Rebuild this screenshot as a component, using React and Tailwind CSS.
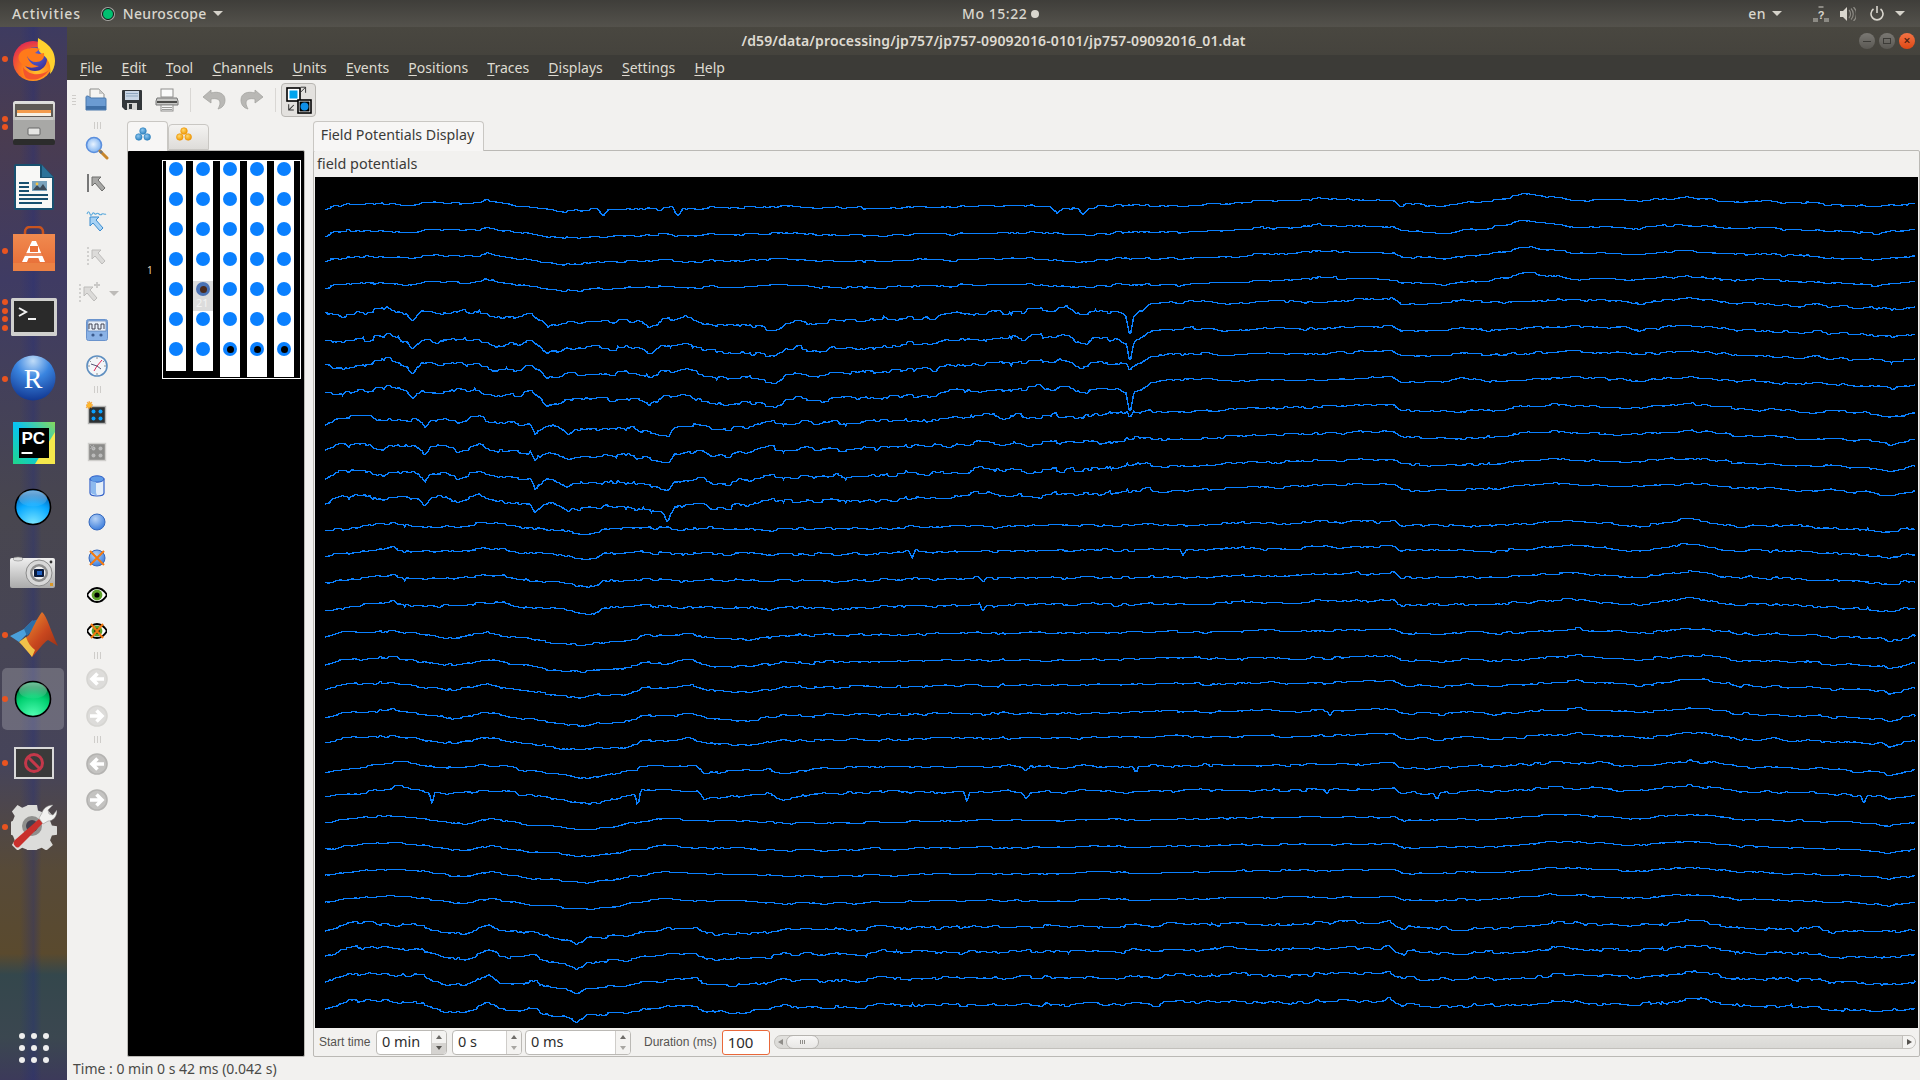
import React from "react";

/* ---------- traces ---------- */
const tail = (o) => [[1500,o],[1550,o-4],[1583,o-4],[1640,o-1],[1690,o-6],[1740,o],[1767,o],[1877,o+5],[1890,o+7],[1916,o+3]];
const GROUPS = {
  A: { amp: 0.9, c: [[325,4],[332,1],[355,-2],[395,-1],[415,0],[425,-2],[480,-2],[487,-5],[500,-3],[525,2],[540,4],[575,6],[600,4],[640,3],[660,2],[700,3],[750,1],[790,1],[820,2],[880,3],[940,1],[1000,1],[1043,0],[1087,3],[1133,-1],[1183,1],[1207,-2],[1320,-7],[1393,-5],[1403,-1],[1443,1],[1500,-7],[1524,-11],[1550,-8],[1583,-6],[1640,-5],[1690,-8],[1740,-4],[1767,-4],[1877,0],[1916,-2]] },
  B: { amp: 2.0, c: [[325,0],[353,-2],[390,-7],[403,-1],[413,7],[420,-2],[453,-3],[473,-4],[487,-3],[500,3],[533,-1],[550,10],[567,5],[587,6],[637,6],[650,10],[657,7],[687,2],[710,8],[737,7],[775,13],[787,6],[820,6],[900,2],[1000,-4],[1067,-7],[1077,-2],[1117,-3],[1128,-2],[1140,-5],[1150,-12],[1177,-14],[1233,-12],[1317,-14],[1393,-17],[1403,-11],[1467,-14],...tail(-12)] },
  C: { amp: 2.0, c: [[325,2],[337,-4],[370,-7],[383,-3],[417,-2],[425,3],[432,-6],[460,0],[480,-6],[500,0],[530,0],[535,9],[553,3],[567,10],[573,6],[610,3],[653,8],[670,11],[678,2],[703,0],[713,5],[753,2],[787,0],[820,0],[900,-4],[1000,-8],[1087,-8],[1130,-11],[1180,-12],[1320,-17],[1393,-18],[1403,-13],...tail(-14)] },
  D: { amp: 1.1, c: [[325,2],[393,-6],[403,-2],[453,-3],[487,-6],[533,0],[570,3],[580,7],[590,7],[603,2],[613,-1],[700,0],[820,1],[900,-1],[1000,-2],[1130,-3],[1300,-6],[1393,-7],[1403,-3],...tail(-3)] },
  E: { amp: 1.0, c: [[325,3],[340,-2],[393,-5],[453,3],[487,-3],[507,2],[567,8],[580,10],[637,5],[642,1],[693,-2],[703,3],[747,5],[787,-1],[820,0],[900,-1],[1000,-2],[1130,-3],[1300,-5],[1393,-6],[1403,-2],...tail(-2)] },
  F: { amp: 1.0, c: [[325,3],[397,-7],[420,-5],[432,-2],[453,0],[487,-3],[533,2],[570,7],[590,10],[637,2],[640,-2],[697,-2],[703,5],[767,0],[780,5],[820,0],[900,-1],[1000,-2],[1130,-2],[1300,-4],[1393,-5],[1403,-1],...tail(-2)] },
  G: { amp: 0.7, c: [[325,2],[370,-4],[420,-3],[453,2],[470,3],[490,-2],[533,5],[560,7],[587,10],[613,7],[630,2],[667,-2],[693,0],[820,3],[900,1],[1000,0],[1130,-1],[1300,-3],[1393,-4],[1403,0],...tail(-1)] },
  H: { amp: 1.4, c: [[325,5],[343,-3],[367,-5],[420,-2],[450,5],[467,7],[490,-2],[500,3],[533,5],[563,10],[577,15],[587,10],[620,8],[653,2],[697,2],[703,5],[737,7],[787,2],[820,2],[900,0],[1000,-1],[1130,-2],[1300,-4],[1393,-5],[1403,-1],...tail(0)] },
};
const ROWS = [
  [205,"A"],[232,"A"],[258,"A"],[284,"A"],[315,"B"],[342,"B"],[367,"B"],[393,"B"],
  [423,"C"],[450,"C"],[477,"C"],[502,"C"],[528,"D"],[553,"D"],[580,"D"],[607,"D"],
  [635,"E"],[662,"E"],[687,"E"],[715,"E"],[740,"E"],[768,"F"],[793,"F"],[820,"G"],
  [847,"G"],[873,"G"],[900,"G"],[927,"H"],[952,"H"],[978,"H"],[1005,"H"],
];
const SPIKES = {
  0: [[603,6,5],[660,4,4],[678,8,5],[1057,7,7],[1083,7,5],[1400,4,5]],
  4: [[1130,17,4],[1128,6,9]], 5: [[1130,17,4],[1128,6,9]], 6: [[1130,5,6]], 7: [[1130,19,4],[1128,6,9]], 8: [[1130,4,3]],
  11: [[667,6,4]], 13: [[912,7,3],[1183,6,3]], 14: [[983,6,4]], 15: [[983,7,3]],
  21: [[1026,5,5],[1136,6,3]],
  22: [[432,12,3],[638,14,3],[967,10,3],[1026,7,5],[1437,8,3],[1327,5,3],[1864,8,3]],
  19: [[1330,4,3]],
};
const rng = (s) => () => { s |= 0; s = (s + 0x6d2b79f5) | 0; let t = Math.imul(s ^ (s >>> 15), 1 | s); t = (t + Math.imul(t ^ (t >>> 7), 61 | t)) ^ t; return ((t ^ (t >>> 14)) >>> 0) / 4294967296; };
const interp = (c, x) => { for (let i = 1; i < c.length; i++) if (x <= c[i][0]) { const [a, b] = c[i - 1], [p, q] = c[i]; return b + ((q - b) * (x - a)) / (p - a); } return c[c.length - 1][1]; };
const stepNoise = (seed, n) => { const r = rng(seed), out = []; let v = 0, hold = 0; for (let i = 0; i < n; i++) { if (hold-- <= 0) { v = v * 0.45 + (r() - 0.5) * 2; hold = Math.floor(r() * 6); } out.push(v); } return out; };
const N = 1000;
const groupNoise = Object.fromEntries(Object.keys(GROUPS).map((k, i) => [k, stepNoise(77 + i * 13, N)]));
const tracePoints = (row) => {
  const [base, g] = ROWS[row], grp = GROUPS[g], own = stepNoise(1000 + row * 7, N), sp = SPIKES[row] || [];
  const pts = [];
  for (let i = 0; i < N; i++) {
    const x = 325 + i * 1.592;
    const quiet = x > 1150 && (g === "B" || g === "C") ? 0.5 : 1;
    let y = base + interp(grp.c, x) + (groupNoise[g][i] * 1.1 + own[i] * 0.75) * grp.amp * quiet;
    for (const [sx, d, w] of sp) y += d * Math.max(0, 1 - Math.abs(x - sx) / w);
    pts.push(`${x.toFixed(1)},${Math.round(y) + 0.5}`);
  }
  return pts.join(" ");
};
const TRACES = ROWS.map((_, i) => tracePoints(i));

/* ---------- dock icons ---------- */
const Firefox = () => (
  <svg width="46" height="46" viewBox="0 0 46 46">
    <defs>
      <radialGradient id="ffo" cx="60%" cy="75%" r="75%"><stop offset="0" stopColor="#ffc42e" /><stop offset=".5" stopColor="#ff7a1a" /><stop offset="1" stopColor="#e3304e" /></radialGradient>
      <radialGradient id="ffb" cx="50%" cy="35%" r="70%"><stop offset="0" stopColor="#5a6be0" /><stop offset="1" stopColor="#3a2a90" /></radialGradient>
    </defs>
    <circle cx="22" cy="25" r="20" fill="url(#ffo)" />
    <circle cx="24" cy="23" r="12" fill="url(#ffb)" />
    <path d="M27 2c6 4 17 9 17 23 0 5-2 10-5 13 1-6 0-11-3-15-2-4-8-5-9-11-.5-4 0-7 0-10z" fill="#ffd22e" />
    <path d="M20 12c5-1 9 1 9 1l-5 4 4 1 5-1c1 6-3 9-8 9-4 0-7-2-9-6 1 4 5 10 12 10-7 3-14 2-19-4C5 20 9 13 20 12z" fill="#ff7a1a" />
    <path d="M12 31c5 8 17 10 26 3-5 8-14 12-23 8-2-2-3-7-3-11z" fill="#f4552d" />
  </svg>
);
const Cabinet = () => (
  <svg width="44" height="46" viewBox="0 0 44 46">
    <defs><linearGradient id="cabg" x1="0" x2="0" y1="0" y2="1"><stop offset="0" stopColor="#e0e0de" /><stop offset="1" stopColor="#8f8f8d" /></linearGradient></defs>
    <rect x="1" y="1" width="42" height="42" rx="2.5" fill="url(#cabg)" />
    <rect x="3" y="4" width="38" height="15" fill="#5e5a56" />
    <rect x="5" y="10" width="34" height="3" fill="#f29a4b" />
    <rect x="5" y="13" width="34" height="3" fill="#f5efe2" />
    <rect x="3" y="17" width="38" height="3" fill="#c9c9c7" />
    <rect x="1" y="20" width="42" height="19" fill="#a8a8a6" />
    <rect x="16" y="28" width="12" height="7" rx="1" fill="#e5e5e3" stroke="#666" />
    <rect x="1" y="39" width="42" height="6" rx="2" fill="#2c2c2c" />
  </svg>
);
const Writer = () => (
  <svg width="42" height="48" viewBox="0 0 42 48">
    <path d="M1 3a2 2 0 0 1 2-2h25l13 13v31a2 2 0 0 1-2 2H3a2 2 0 0 1-2-2z" fill="#18506f" />
    <path d="M3 3h24v12h12v30H3z" fill="#f8f8f6" />
    <path d="M29 2l11 12H29z" fill="#2a7299" />
    <rect x="19" y="18" width="15" height="10" fill="#7aa3bc" />
    <path d="M20 27l4-5 3 3 3-4 4 6z" fill="#3c4b58" />
    <circle cx="24" cy="21" r="1.4" fill="#f6c445" />
    <g fill="#18506f"><rect x="6" y="19" width="10" height="2" /><rect x="6" y="23" width="10" height="2" /><rect x="6" y="27" width="10" height="2" /><rect x="6" y="31" width="29" height="2" /><rect x="6" y="35" width="29" height="2" /><rect x="6" y="39" width="23" height="2" /></g>
  </svg>
);
const Bag = () => (
  <svg width="44" height="46" viewBox="0 0 44 46">
    <defs><linearGradient id="bagg" x1="0" x2="0" y1="0" y2="1"><stop offset="0" stopColor="#f08a4f" /><stop offset="1" stopColor="#e76b35" /></linearGradient></defs>
    <path d="M13 11V6c0-3 2-5 5-5h8c3 0 5 2 5 5v5" fill="none" stroke="#c9541f" strokeWidth="2.5" />
    <rect x="1" y="8" width="42" height="37" fill="url(#bagg)" />
    <rect x="1" y="37" width="42" height="8" fill="#ec8144" />
    <path d="M20 15h4l9 21h-5l-1.6-4H16.6L15 36h-5z" fill="#fff" />
    <rect x="18" y="20" width="8" height="6" fill="#ea7038" />
    <rect x="13" y="27" width="18" height="3" fill="#ea7038" opacity=".8" />
  </svg>
);
const Terminal = () => (
  <svg width="46" height="38" viewBox="0 0 46 38">
    <rect width="46" height="38" rx="1.5" fill="#d0d0ce" />
    <rect x="3" y="3" width="40" height="31" fill="#2a2a2a" />
    <path d="M8 10l7 4-7 4" fill="none" stroke="#f3f3f3" strokeWidth="2" />
    <rect x="17" y="20" width="8" height="2" fill="#f3f3f3" />
  </svg>
);
const RLogo = () => (
  <svg width="46" height="46" viewBox="0 0 46 46">
    <defs><radialGradient id="rlg" cx="50%" cy="12%" r="95%"><stop offset="0" stopColor="#c0dcf8" /><stop offset=".4" stopColor="#3a85e0" /><stop offset="1" stopColor="#0d2e88" /></radialGradient></defs>
    <circle cx="23" cy="23" r="22.5" fill="url(#rlg)" />
    <text x="23" y="33" textAnchor="middle" fill="#fff" fontSize="28" fontFamily="'Liberation Serif',serif">R</text>
  </svg>
);
const PyCharm = () => (
  <svg width="42" height="42" viewBox="0 0 42 42">
    <defs><linearGradient id="pcg" x1="0" y1="1" x2="1" y2="0"><stop offset="0" stopColor="#21d789" /><stop offset=".5" stopColor="#07c3f2" /><stop offset="1" stopColor="#87d95a" /></linearGradient></defs>
    <rect width="42" height="42" fill="url(#pcg)" />
    <path d="M42 10v32H22z" fill="#f5e84c" />
    <rect x="6" y="6" width="30" height="30" fill="#000" />
    <text x="8.5" y="22" fill="#fff" fontSize="17" fontWeight="700" fontFamily="'Liberation Sans',sans-serif">PC</text>
    <rect x="8.5" y="30" width="11" height="2" fill="#fff" />
  </svg>
);
const Ball = ({ id, a, b, c }) => (
  <svg width="38" height="38" viewBox="0 0 38 38">
    <defs>
      <radialGradient id={id} cx="50%" cy="100%" r="85%"><stop offset="0" stopColor={a} /><stop offset=".7" stopColor={b} /><stop offset="1" stopColor={c} /></radialGradient>
      <linearGradient id={id + "h"} x1="0" x2="0" y1="0" y2="1"><stop offset="0" stopColor="#fff" stopOpacity=".45" /><stop offset="1" stopColor="#fff" stopOpacity=".05" /></linearGradient>
    </defs>
    <circle cx="19" cy="19" r="17.5" fill={`url(#${id})`} stroke="#000" strokeWidth="1.6" />
    <ellipse cx="19" cy="10.5" rx="14" ry="8" fill={`url(#${id}h)`} />
  </svg>
);
const Camera = () => (
  <svg width="46" height="34" viewBox="0 0 46 34">
    <defs><linearGradient id="camg" x1="0" x2="0" y1="0" y2="1"><stop offset="0" stopColor="#efefef" /><stop offset="1" stopColor="#aaa" /></linearGradient></defs>
    <rect x="0" y="2" width="45" height="30" rx="2" fill="url(#camg)" />
    <ellipse cx="8" cy="3" rx="5" ry="2" fill="#ddd" stroke="#888" strokeWidth=".6" />
    <circle cx="29" cy="17" r="13" fill="#d8d8d8" stroke="#8b8b8b" />
    <circle cx="29" cy="17" r="9" fill="#8c8c8c" />
    <circle cx="29" cy="17" r="6.5" fill="#efefef" />
    <rect x="24" y="13" width="10" height="8" rx="1" fill="#0b1a3a" />
    <rect x="27" y="15" width="5" height="4" fill="#1f5fc0" />
    <rect x="40" y="27" width="3" height="3" fill="#d9982a" />
    <circle cx="41" cy="6" r="1.4" fill="#333" />
  </svg>
);
const Matlab = () => (
  <svg width="50" height="46" viewBox="0 0 50 46">
    <defs><linearGradient id="mlg" x1="0" x2="1" y1="0" y2="1"><stop offset="0" stopColor="#f5a033" /><stop offset=".55" stopColor="#c8471e" /><stop offset="1" stopColor="#8d2a12" /></linearGradient></defs>
    <path d="M1 24l14-7 9-9-6 14-8 8z" fill="#4aa0dc" />
    <path d="M15 17l8-8 7 -2-4 9-8 8z" fill="#2b6fa8" />
    <path d="M33 0c5 4 9 20 16 34l-10-6c-5 3-9 10-16 17-3-4-8-11-12-15l9-7c3-5 8-17 13-23z" fill="url(#mlg)" />
    <path d="M10 30c4 4 9 10 13 15l3-7c-4-3-7-7-9-13z" fill="#f0c24a" />
  </svg>
);
const NoSign = () => (
  <svg width="40" height="32" viewBox="0 0 40 32">
    <rect width="40" height="32" fill="#d9d9d9" />
    <rect x="2" y="2" width="36" height="28" fill="#3a3a3a" />
    <circle cx="20" cy="16" r="8.5" fill="none" stroke="#c4384a" strokeWidth="3" />
    <path d="M14 10l12 12" stroke="#c4384a" strokeWidth="3" />
  </svg>
);
const Gear = () => (
  <svg width="46" height="46" viewBox="0 0 46 46">
    <path d="M18 1h10l1 6 5 2 5-3 6 7-3 5 2 5 6 1v9l-6 1-2 5 3 5-7 6-5-3-5 2-1 2H18l-1-2-5-2-5 3-6-6 3-5-2-5-2-1V19l2-1 2-5-3-5 6-7 5 3 5-2z" transform="scale(.93)" fill="#dcdcda" />
    <circle cx="21" cy="22" r="10" fill="#8f8f8d" />
    <circle cx="21" cy="22" r="6" fill="#43404f" />
    <path d="M4 42c-2-2-2-4 0-6L28 15l4 4-23 23c-2 2-3 2-5 0z" fill="#c9302c" />
    <path d="M28 14l3-5c1-4 5-8 11-8l-5 5 1 4 4 1 4-5c0 7-4 11-9 11l-5 3z" fill="#f1f1ef" stroke="#888" strokeWidth=".5" />
  </svg>
);

const DOCK = [
  { el: <Firefox />, dots: [32] },
  { el: <Cabinet />, dots: [28, 36] },
  { el: <Writer />, dots: [] },
  { el: <Bag />, dots: [32], cls: "-translate-y-[2px]" },
  { el: <Terminal />, dots: [19, 28, 36, 45], cls: "translate-y-[2px]" },
  { el: <RLogo />, dots: [32], cls: "-translate-y-[1px] -translate-x-[1px]" },
  { el: <PyCharm />, dots: [] },
  { el: <Ball id="bl" a="#7fe8ff" b="#08a8ff" c="#0a70c0" />, dots: [], cls: "-translate-x-[1px]" },
  { el: <Camera />, dots: [], cls: "translate-y-[2px] -translate-x-[1px]" },
  { el: <Matlab />, dots: [32] },
  { el: <Ball id="gr" a="#55ffb5" b="#00d070" c="#008a48" />, dots: [32], active: true, cls: "-translate-x-[1px]" },
  { el: <NoSign />, dots: [32] },
  { el: <Gear />, dots: [32] },
];

/* ---------- toolbar icons ---------- */
const IOpen = () => (
  <svg width="24" height="24" viewBox="0 0 24 24">
    <path d="M6 1h9l5 5v8H6z" fill="#f4f4f2" stroke="#8d8d8a" />
    <path d="M15 1l5 5h-5z" fill="#c9c9c7" />
    <path d="M2 9c0-1 1-1 2-1l3 2h14a1 1 0 0 1 1 1v11H2z" fill="#6b9bd2" stroke="#4a78ac" />
    <rect x="2" y="18" width="20" height="3.6" fill="#3f6fa6" />
  </svg>
);
const ISave = () => (
  <svg width="22" height="22" viewBox="0 0 22 22">
    <path d="M1 2a1 1 0 0 1 1-1h18a1 1 0 0 1 1 1v19H4l-3-3z" fill="#33373a" />
    <rect x="4" y="2" width="14" height="9" fill="#c9d6e5" />
    <g fill="#8ea5be"><rect x="5" y="4" width="12" height="1" /><rect x="5" y="6.5" width="12" height="1" /></g>
    <rect x="6" y="14" width="10" height="7" fill="#d5d5d3" />
    <rect x="8" y="15" width="3" height="5" fill="#33373a" />
  </svg>
);
const IPrint = () => (
  <svg width="24" height="24" viewBox="0 0 24 24">
    <rect x="6" y="1" width="12" height="8" fill="#fafafa" stroke="#8f8f8d" />
    <path d="M2 10h20l1 3v4H1v-4z" fill="#c7c7c5" stroke="#777" />
    <rect x="2" y="13" width="20" height="2" fill="#4b4b49" />
    <rect x="6" y="17" width="12" height="6" fill="#f5f5f5" stroke="#8f8f8d" />
    <g fill="#9b9b99"><rect x="7" y="19" width="10" height="1" /><rect x="7" y="21" width="10" height="1" /></g>
  </svg>
);
const IUndo = ({ flip }) => (
  <svg width="24" height="22" viewBox="0 0 24 22" className={flip ? "-scale-x-100" : ""}>
    <path d="M9 1L1 8l8 6v-4c5-1 9 0 9 4 0 2-1 4-2 6 4-1 7-4 7-9C23 4 16 2 9 4z" fill="#b9b8b5" stroke="#a5a4a1" strokeWidth=".8" strokeLinejoin="round" />
  </svg>
);
const IToggle = () => (
  <svg width="24" height="30" viewBox="0 0 24 30" className="w-[26px] h-[30px]">
    <rect x="0" y="3" width="13" height="13" fill="#fff" stroke="#000" strokeWidth="1.6" />
    <rect x="2.5" y="5.5" width="8" height="8" fill="#00a4ee" />
    <rect x="11" y="15" width="13" height="13" fill="#fff" stroke="#000" strokeWidth="1.6" />
    <rect x="12.5" y="16.5" width="10" height="10" fill="#000" />
    <circle cx="17.5" cy="21.5" r="4" fill="#0f8fe8" />
    <path d="M22 11V4h-6M22 4l-7 7" fill="none" stroke="#333" strokeWidth="1.2" transform="translate(1 -1) scale(.8)" />
    <path d="M2 19v7h6M2 26l6-6" fill="none" stroke="#333" strokeWidth="1.2" transform="translate(0 3) scale(.85)" />
  </svg>
);
const ISearch = () => (
  <svg width="24" height="24" viewBox="0 0 24 24">
    <defs><radialGradient id="sg" cx="45%" cy="45%" r="60%"><stop offset="0" stopColor="#e8f3ff" /><stop offset="1" stopColor="#77aef0" /></radialGradient></defs>
    <circle cx="9" cy="9" r="7.5" fill="url(#sg)" stroke="#5b8fdd" strokeWidth="1.6" />
    <path d="M15 15l7 7" stroke="#c8862a" strokeWidth="3" strokeLinecap="round" />
    <path d="M15 15l2 2" stroke="#777" strokeWidth="3" />
  </svg>
);
const IBarArrow = () => (
  <svg width="20" height="20" viewBox="0 0 20 20">
    <rect x="0" y="0" width="2" height="18" fill="#777" />
    <path d="M5 3h9l-3 3 7 8-3 3-7-8-3 3z" fill="#a8a8a6" stroke="#6e6e6c" />
  </svg>
);
const IWaveArrow = () => (
  <svg width="22" height="22" viewBox="0 0 22 22">
    <path d="M1 4c1-3 2-3 3 0s2 0 3-1 2 2 3 1 2-1 3 0 2 1 3 0 3 1 4 0" fill="none" stroke="#5aa9dc" strokeWidth="1.1" />
    <path d="M4 7h9l-3 3 7 8-3 3-7-8-3 3z" fill="#a7d2f4" stroke="#3b8ccf" />
  </svg>
);
const IDashArrow = () => (
  <svg width="20" height="20" viewBox="0 0 20 20">
    <path d="M1 0v19" stroke="#c9c8c6" strokeWidth="1.6" strokeDasharray="2 2" />
    <path d="M5 3h9l-3 3 7 8-3 3-7-8-3 3z" fill="#dcdbd9" stroke="#bdbcba" />
  </svg>
);
const IDashPlus = () => (
  <svg width="22" height="22" viewBox="0 0 22 22">
    <path d="M1 2v19" stroke="#c9c8c6" strokeWidth="1.6" strokeDasharray="2 2" />
    <path d="M5 5h9l-3 3 7 8-3 3-7-8-3 3z" fill="#dcdbd9" stroke="#bdbcba" />
    <path d="M15 3h6M18 0v6" stroke="#c9c8c6" strokeWidth="1.8" />
  </svg>
);
const IScope = () => (
  <svg width="22" height="22" viewBox="0 0 22 22">
    <rect x=".5" y=".5" width="21" height="21" rx="2" fill="#8ab2e6" stroke="#6a93cc" />
    <rect x="2" y="2" width="18" height="10" fill="#e8f0fa" stroke="#4c6fa5" strokeWidth=".6" />
    <path d="M3 10V5h3v5h3V5h3v5h3V5h3v5" fill="none" stroke="#334" strokeWidth=".9" />
    <circle cx="7" cy="16" r="1.6" fill="#3b5a8c" /><circle cx="15" cy="16" r="1.6" fill="#3b5a8c" />
  </svg>
);
const IClock = () => (
  <svg width="22" height="22" viewBox="0 0 22 22">
    <circle cx="11" cy="11" r="10" fill="#f4f6f8" stroke="#5f8fc0" strokeWidth="1.6" />
    <path d="M16 5l-5 6-3 5" fill="none" stroke="#d14" strokeWidth=".9" />
    <path d="M11 11l-6-2M11 11l4 3" stroke="#446" strokeWidth=".9" />
    <path d="M4 6l1 1M11 2v2M18 6l-1 1M2 11h2M20 11h-2M11 20v-2" stroke="#777" strokeWidth=".8" />
  </svg>
);
const IGrid = ({ off }) => (
  <svg width="24" height="24" viewBox="0 0 24 24">
    <rect x="3.5" y="5.5" width="17" height="17" fill={off ? "#8b8b89" : "#2d3133"} stroke={off ? "#cfcecb" : "#b5b5b3"} strokeWidth="1.4" />
    {[[8.5,10.5],[15.5,10.5],[8.5,17.5],[15.5,17.5]].map(([x,y],i)=><circle key={i} cx={x} cy={y} r="2" fill={off ? "#bbb" : "#0aa0ff"} />)}
    {!off && <path d="M3 0l1 2 2-1-1 2 2 1-2 1 1 2-2-1-1 2-1-2-2 1 1-2-1-1 2-1-1-2 2 1z" fill="#ffb82a" stroke="#f08a1a" strokeWidth=".4" transform="translate(1 0)" />}
    {off && <path d="M5 7l4 4M9 7l-4 4" stroke="#aaa" />}
  </svg>
);
const ICyl = () => (
  <svg width="16" height="22" viewBox="0 0 16 22">
    <path d="M1 4v14c0 2 3 3 7 3s7-1 7-3V4z" fill="#e4eef9" stroke="#2f5fc8" strokeWidth="1.2" />
    <ellipse cx="8" cy="4" rx="7" ry="3.2" fill="#5f9be6" stroke="#2f5fc8" />
    <path d="M2 6v12c2 1.5 4 2 6 2-1-1-1-3-1-5V7z" fill="#8db9ee" />
  </svg>
);
const IBlue = ({ x }) => (
  <svg width="20" height="20" viewBox="0 0 20 20">
    <defs><radialGradient id="ibg" cx="40%" cy="30%" r="70%"><stop offset="0" stopColor="#b7d3f6" /><stop offset="1" stopColor="#3f7fdc" /></radialGradient></defs>
    <circle cx="10" cy="10" r="8" fill="url(#ibg)" stroke="#3568bd" />
    {x && <path d="M3 3l14 14M17 3L3 17" stroke="#f47a10" strokeWidth="2" />}
  </svg>
);
const IEye = ({ x }) => (
  <svg width="20" height="20" viewBox="0 0 20 20">
    <path d="M0 10c3-5 6-7 10-7s7 2 10 7c-3 5-6 7-10 7S3 15 0 10z" fill="#fff" stroke="#000" strokeWidth="1.8" />
    <circle cx="10" cy="10" r="5.4" fill="#5ea32a" />
    <circle cx="10" cy="10" r="2.6" fill="#000" />
    {x && <path d="M4 3l12 14M16 3L4 17" stroke="#f47a10" strokeWidth="2" />}
  </svg>
);
const ICircArrow = ({ right, pale }) => (
  <svg width="24" height="24" viewBox="0 0 24 24" className={right ? "-scale-x-100" : ""}>
    <circle cx="12" cy="12" r="10" fill={pale ? "#dddcda" : "#c4c3c1"} stroke={pale ? "#d6d5d2" : "#b4b3b1"} strokeWidth="1.6" />
    <path d="M19 12H8M12.5 6.5L7 12l5.5 5.5" fill="none" stroke="#fff" strokeWidth="3.6" />
  </svg>
);
const Trio = ({ a, b, id }) => (
  <svg width="16" height="14" viewBox="0 0 16 14">
    <defs><radialGradient id={id} cx="40%" cy="35%" r="70%"><stop offset="0" stopColor={a} /><stop offset="1" stopColor={b} /></radialGradient></defs>
    <circle cx="8" cy="4" r="3.3" fill={`url(#${id})`} stroke={b} strokeWidth=".6" />
    <circle cx="3.8" cy="10" r="3.3" fill={`url(#${id})`} stroke={b} strokeWidth=".6" />
    <circle cx="12.2" cy="10" r="3.3" fill={`url(#${id})`} stroke={b} strokeWidth=".6" />
  </svg>
);
const Grip = ({ h }) => (
  <div className={`flex items-center justify-center gap-[2px] w-full ${h}`}>
    <span className="w-px h-[7px] bg-[#cfcdca]" /><span className="w-px h-[7px] bg-[#cfcdca]" /><span className="w-px h-[7px] bg-[#cfcdca]" />
  </div>
);
const VTool = ({ children, extra }) => (
  <div className="relative h-[36.3px] w-full flex items-center justify-center">{children}{extra}</div>
);

const Tri = ({ c = "#d5d2ca" }) => <svg width="10" height="5" viewBox="0 0 10 5"><path d="M0 0h10L5 5z" fill={c} /></svg>;

const Spin = ({ w, value, dark }) => (
  <div className={`flex h-[25px] bg-white border border-[#bbb9b5] rounded-[4px] overflow-hidden ${w}`}>
    <div className="flex-1 flex items-center pl-[5px] text-[14.5px] text-[#2d2d2d]">{value}</div>
    <div className="w-[15px] flex flex-col items-center border-l border-[#cfcdca] bg-[#f4f3f1]">
      <div className="h-[12px] flex items-center justify-center"><svg width="6" height="4" viewBox="0 0 6 4"><path d="M3 0l3 4H0z" fill="#6e6c68" /></svg></div>
      <div className={`flex-1 w-full flex items-center justify-center ${dark ? "bg-[#d5d3d0]" : ""}`}><svg width="6" height="4" viewBox="0 0 6 4"><path d="M0 0h6L3 4z" fill={dark ? "#55534f" : "#a9a7a3"} /></svg></div>
    </div>
  </div>
);

const MENU = ["File", "Edit", "Tool", "Channels", "Units", "Events", "Positions", "Traces", "Displays", "Settings", "Help"];

export default function App() {
  return (
    <div className="w-[1920px] h-[1080px] flex flex-col overflow-hidden bg-[#f2f1ef] font-['Noto_Sans',sans-serif]">
      {/* top bar */}
      <div className="h-[27px] shrink-0 flex items-center bg-[linear-gradient(180deg,#3f3e3a,#54524c)] text-[#d9d6ce] text-[14px] font-medium">
        <div className="w-[962px] flex items-center">
          <span className="ml-[12px] tracking-[0.85px]">Activities</span>
          <span className="ml-[21px] w-[12px] h-[12px] rounded-full bg-[#00c070] border border-[#111] ring-1 ring-white/50" />
          <span className="ml-[9px] tracking-[0.3px]">Neuroscope</span>
          <span className="ml-[6px] flex"><Tri /></span>
        </div>
        <span className="tracking-[0.55px]">Mo 15:22</span>
        <span className="ml-[4px] w-[8px] h-[8px] rounded-full bg-[#d9d6ce]" />
        <div className="ml-auto flex items-center text-[#d9d6ce]">
          <span className="tracking-[0.5px]">en</span>
          <span className="ml-[6px] flex"><Tri /></span>
          <svg className="ml-[31px]" width="16" height="16" viewBox="0 0 16 16">
            <g fill="#8c8a84"><rect x="0" y="12" width="5" height="4" /><rect x="11" y="12" width="5" height="4" /><rect x="5.5" y="0" width="5" height="2" /></g>
            <text x="8" y="13" textAnchor="middle" fontSize="11" fontWeight="700" fill="#d9d6ce" fontFamily="'Liberation Sans',sans-serif">?</text>
          </svg>
          <svg className="ml-[11px]" width="16" height="14" viewBox="0 0 16 14">
            <path d="M0 4h3l4-4v14l-4-4H0z" fill="#d9d6ce" />
            <path d="M9 3c2 2 2 6 0 8M11 1.5c3 3 3 8 0 11M13.5 0c4 4 4 10 0 14" fill="none" stroke="#8c8a84" strokeWidth="1.2" />
          </svg>
          <svg className="ml-[14px]" width="14" height="15" viewBox="0 0 14 15">
            <path d="M7 0v7" stroke="#d9d6ce" strokeWidth="1.6" />
            <path d="M3.5 3a6 6 0 1 0 7 0" fill="none" stroke="#d9d6ce" strokeWidth="1.6" />
          </svg>
          <span className="ml-[11px] mr-[15px] flex"><Tri /></span>
        </div>
      </div>

      <div className="flex-1 flex min-h-0">
        {/* dock */}
        <div className="w-[67px] shrink-0 flex flex-col bg-[linear-gradient(90deg,transparent_30%,rgba(35,45,125,0.35)_50%,transparent_62%),linear-gradient(180deg,#3e3b60_0%,#4a3c50_10%,#3f3b63_24%,#48464f_46%,#46445a_70%,#574a38_80%,#5a4a2e_88%,#34474c_90%,#3b4750_96%,#3c3a5a_100%)]">
          {DOCK.map((d, i) => (
            <div key={i} className="relative h-[64px] flex items-center justify-center">
              {d.active && <div className="absolute left-[2px] top-[1px] w-[62px] h-[62px] rounded-[5px] bg-white/20" />}
              <div className={`relative flex ${d.cls || ""}`}>{d.el}</div>
              {d.dots.map((y) => <span key={y} className="absolute left-[2px] w-[6px] h-[6px] rounded-full bg-[#e95420]" style={{ top: y - 3 }} />)}
            </div>
          ))}
          <div className="mt-auto h-[64px] flex items-center justify-center">
            <div className="grid grid-cols-3 gap-[6px]">
              {[0,1,2,3,4,5,6,7,8].map((i) => <span key={i} className="w-[6px] h-[6px] rounded-full bg-[#eeeeee]" />)}
            </div>
          </div>
        </div>

        {/* window */}
        <div className="relative flex-1 flex flex-col min-w-0">
          <div className="relative h-[28px] shrink-0 flex items-center justify-center pb-px bg-[linear-gradient(180deg,#494740,#45433d)] text-[#dfdbd2] text-[14px] font-semibold">
            <span className="tracking-[0.13px]">/d59/data/processing/jp757/jp757-09092016-0101/jp757-09092016_01.dat</span>
            <div className="absolute right-[5px] top-[6px] flex gap-[4px]">
              <span className="w-[16px] h-[16px] rounded-full bg-[linear-gradient(180deg,#7a7873,#5a5853)] flex items-center justify-center"><span className="w-[8px] h-px bg-[#3c3b37]" /></span>
              <span className="w-[16px] h-[16px] rounded-full bg-[linear-gradient(180deg,#7a7873,#5a5853)] flex items-center justify-center"><span className="w-[8px] h-[6px] border border-[#3c3b37]" /></span>
              <span className="w-[16px] h-[16px] rounded-full bg-[linear-gradient(180deg,#f37345,#dd4814)] flex items-center justify-center text-[#4a2010] text-[12px] leading-none">×</span>
            </div>
          </div>
          <div className="h-[25px] shrink-0 flex items-center gap-[19.2px] pl-[13px] bg-[#3c3b37] text-[#dfdbd2] text-[14px]">
            {MENU.map((m) => <span key={m}><span className="underline underline-offset-2 decoration-1">{m[0]}</span>{m.slice(1)}</span>)}
          </div>
          {/* toolbar */}
          <div className="h-[38px] shrink-0 flex items-center pt-[2px] bg-[#f2f1ef]">
            <div className="ml-[5px] flex flex-col gap-[2px]"><span className="w-[4px] h-px bg-[#cfcdca]" /><span className="w-[4px] h-px bg-[#cfcdca]" /><span className="w-[4px] h-px bg-[#cfcdca]" /><span className="w-[4px] h-px bg-[#cfcdca]" /></div>
            <span className="ml-[8px] flex"><IOpen /></span>
            <span className="ml-[13px] flex"><ISave /></span>
            <span className="ml-[12px] flex"><IPrint /></span>
            <span className="ml-[11px] w-px h-[24px] bg-[#d9d7d4]" />
            <span className="ml-[11px] flex"><IUndo /></span>
            <span className="ml-[14px] flex"><IUndo flip /></span>
            <span className="ml-[11px] w-px h-[24px] bg-[#d9d7d4]" />
            <span className="ml-[5px] w-[35px] h-[34px] -mt-[1px] rounded-[4px] border border-[#b8b6b2] bg-[#e3e1de] flex items-center justify-center"><IToggle /></span>
          </div>

          {/* body */}
          <div className="flex-1 flex min-h-0">
            {/* vertical toolbar */}
            <div className="w-[60px] shrink-0 flex flex-col pt-[2px]">
              <Grip h="h-[10px]" />
              <VTool><ISearch /></VTool>
              <VTool><IBarArrow /></VTool>
              <VTool><IWaveArrow /></VTool>
              <VTool><IDashArrow /></VTool>
              <VTool extra={<span className="absolute right-[8px] top-[16px] flex"><Tri c="#bdbbb8" /></span>}><span className="-ml-[14px] flex"><IDashPlus /></span></VTool>
              <VTool><IScope /></VTool>
              <VTool><IClock /></VTool>
              <Grip h="h-[11px]" />
              <VTool><IGrid /></VTool>
              <VTool><IGrid off /></VTool>
              <VTool><ICyl /></VTool>
              <VTool><IBlue /></VTool>
              <VTool><IBlue x /></VTool>
              <VTool><IEye /></VTool>
              <VTool><IEye x /></VTool>
              <Grip h="h-[12px]" />
              <VTool><ICircArrow pale /></VTool>
              <VTool><ICircArrow right pale /></VTool>
              <Grip h="h-[12px]" />
              <VTool><ICircArrow /></VTool>
              <VTool><ICircArrow right /></VTool>
            </div>

            {/* palette */}
            <div className="w-[178px] shrink-0 flex flex-col pt-[2px]">
              <div className="h-[30px] flex items-end relative z-10">
                <div className="w-[41px] h-[30px] rounded-t-[4px] border border-b-0 border-[#c9c7c3] bg-[#f7f6f5] flex items-start pt-[5px] pr-[10px] justify-center -mb-px"><Trio a="#8cc6f0" b="#2a7fbe" id="t1" /></div>
                <div className="w-[41px] h-[26px] rounded-t-[4px] border border-[#c9c7c3] bg-[linear-gradient(180deg,#f4f3f1,#dedcd9)] flex items-start pt-[2px] pr-[10px] justify-center"><Trio a="#ffd86a" b="#ee9400" id="t2" /></div>
              </div>
              <div className="flex-1 border border-[#bbb9b5] rounded-[2px] bg-black pl-[34px] pt-[9px]">
                <div className="relative w-[139px] h-[219px] border border-white flex gap-[7px] pl-[3px] items-start">
                  <span className="absolute -left-[16px] top-[102px] text-[10px] leading-[14px] text-[#e8d8b8]">1</span>
                  {[0,1,2,3,4].map((c) => (
                    <div key={c} className={`w-[20px] bg-white flex flex-col ${c < 2 ? "h-[210px]" : "h-[216px]"}`}>
                      {[0,1,2,3,4,5,6].map((r) => {
                        const sel = c === 1 && r === 4;
                        const dark = c >= 2 && r === 6;
                        return (
                          <div key={r} className={`relative h-[30px] shrink-0 flex justify-center pt-[1px] ${sel ? "bg-[#dcdcdc]" : ""}`}>
                            <span className={`w-[14px] h-[14px] rounded-full flex items-center justify-center ${sel ? "bg-[#4a72b4]" : "bg-[#0a80ff]"}`}>
                              {sel && <span className="w-[7px] h-[7px] rounded-full bg-[#4a2a1c]" />}
                              {dark && <span className="w-[7px] h-[7px] rounded-full bg-black" />}
                            </span>
                            {sel && <span className="absolute left-[3px] top-[15px] text-[11px] leading-[14px] text-[#f2f2f2]">21</span>}
                          </div>
                        );
                      })}
                    </div>
                  ))}
                </div>
              </div>
            </div>

            <div className="w-[8px] shrink-0" />

            {/* main */}
            <div className="flex-1 flex flex-col pt-[2px] min-w-0">
              <div className="h-[30px] flex items-end relative z-10">
                <div className="w-[171px] h-[30px] rounded-t-[4px] border border-b-0 border-[#c9c7c3] bg-[#f7f6f5] flex items-center justify-center pb-[3px] pr-[2px] -mb-px text-[14.2px] text-[#3a3a38]">Field Potentials Display</div>
              </div>
              <div className="flex-1 border border-[#bbb9b5] rounded-[2px] pl-px pr-px flex flex-col min-h-0">
                <div className="h-[26px] shrink-0 flex items-center pl-[2px] text-[14.4px] text-[#3a3a38]">field potentials</div>
                <svg className="w-full h-[851px] block bg-black shrink-0" viewBox="315 177 1603 851" preserveAspectRatio="none">
                  {TRACES.map((p, i) => <polyline key={i} points={p} fill="none" stroke="#0a80ff" strokeWidth="1.5" shapeRendering="crispEdges" />)}
                </svg>
                <div className="flex-1 min-h-0 flex items-center font-['Liberation_Sans',sans-serif]">
                  <span className="w-[55px] pl-[4px] text-[12px] text-[#55534f] whitespace-nowrap">Start time</span>
                  <span className="ml-[6px] flex font-['Noto_Sans',sans-serif]"><Spin w="w-[71px]" value="0 min" dark /></span>
                  <span className="ml-[5px] flex font-['Noto_Sans',sans-serif]"><Spin w="w-[70px]" value="0 s" /></span>
                  <span className="ml-[3px] flex font-['Noto_Sans',sans-serif]"><Spin w="w-[106px]" value="0 ms" /></span>
                  <span className="ml-[13px] text-[12px] text-[#55534f] whitespace-nowrap">Duration (ms)</span>
                  <div className="ml-[5px] w-[48px] h-[25px] bg-white border border-[#e9683a] rounded-[3px] flex items-center pl-[5px] text-[15px] text-[#2d2d2d] font-['Noto_Sans',sans-serif]">100</div>
                  <div className="ml-[4px] flex-1 relative h-[14px] rounded-[7px] border border-[#c2c0bc] bg-[linear-gradient(180deg,#e2e1de,#d9d8d5)] mr-[2px] flex items-center justify-between">
                    <span className="ml-[3px] flex"><svg width="5" height="6" viewBox="0 0 5 6"><path d="M5 0v6L0 3z" fill="#8f8d89" /></svg></span>
                    <span className="absolute left-[11px] -top-px w-[33px] h-[14px] rounded-[7px] border border-[#b5b3af] bg-[linear-gradient(180deg,#f8f7f6,#e8e7e5)] flex items-center justify-center gap-[1px]"><i className="w-px h-[4px] bg-[#8f8d89]" /><i className="w-px h-[4px] bg-[#8f8d89]" /><i className="w-px h-[4px] bg-[#8f8d89]" /></span>
                    <span className="h-full w-[13px] rounded-r-[7px] border-l border-[#c2c0bc] bg-[#f4f3f1] flex items-center justify-center"><svg width="5" height="6" viewBox="0 0 5 6"><path d="M0 0v6l5-3z" fill="#55534f" /></svg></span>
                  </div>
                </div>
              </div>
            </div>
          </div>
          {/* status */}
          <div className="h-[23px] shrink-0 flex items-center pl-[6px] text-[14px] text-[#4a4a47]">Time : 0 min 0 s 42 ms (0.042 s)</div>
        </div>
      </div>
    </div>
  );
}
